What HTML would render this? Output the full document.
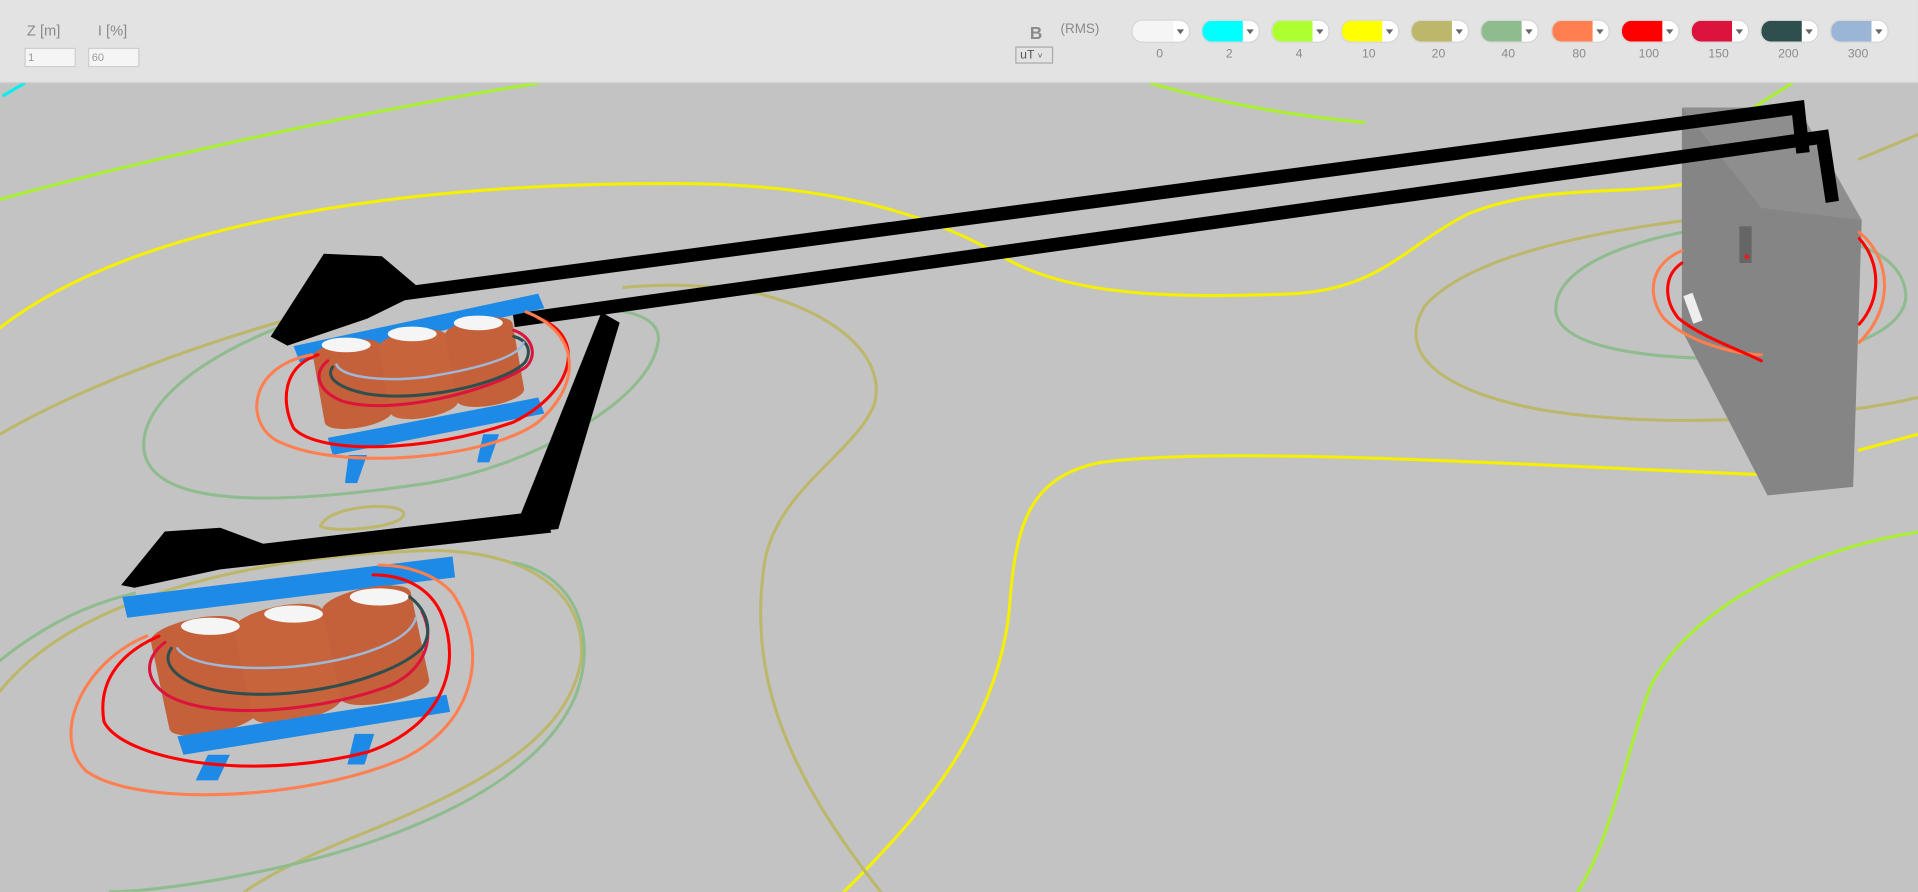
<!DOCTYPE html>
<html><head><meta charset="utf-8"><style>
html,body{margin:0;padding:0;width:1918px;height:892px;overflow:hidden;background:#c3c3c3;font-family:"Liberation Sans",sans-serif}
#w{position:absolute;left:0;top:0;width:1568px;height:729px;transform:scale(1.2232);transform-origin:0 0}
#hdr{position:absolute;left:0;top:0;width:1568px;height:67px;background:#e3e3e3;border-bottom:1px solid #d0d0d0}
.t{position:absolute;color:#8a8a8a;font-size:12px}
.in{position:absolute;width:38px;height:14px;background:#f5f5f5;border:1px solid #ccc;font-size:9px;color:#999;line-height:14px;padding-left:2px;box-sizing:content-box}
.pill{position:absolute;top:16px;width:46px;height:17px;border-radius:9px;border:1px solid #d5d5d5;background:#fff;overflow:hidden}
.pill i{position:absolute;left:0;top:0;width:33px;height:17px}
.pill b{position:absolute;left:36px;top:7px;width:0;height:0;border-left:3px solid transparent;border-right:3px solid transparent;border-top:4px solid #666}
.lab{position:absolute;top:39px;width:46px;text-align:center;font-size:10px;color:#8a8a8a}
svg{position:absolute;left:0;top:0}
</style></head><body><div id="w">
<svg width="1568" height="729" viewBox="0 0 1568 729" fill="none" stroke-linecap="round">
<rect width="1568" height="729" fill="#c3c3c3"/>
<g stroke-width="2.5">
<path d="M3 78 L20 68" stroke="#00f0f0"/>
<path d="M0 163 C120 130 300 90 440 68" stroke="#a8f030"/>
<path d="M940 68 C1000 85 1060 95 1115 100" stroke="#a8f030"/>
<path d="M1415 100 L1465 68" stroke="#a8f030"/>
<path d="M1568 435 C1470 450 1380 500 1350 560 C1330 610 1320 680 1290 729" stroke="#a8f030"/>
<path d="M0 268 C100 190 300 150 550 150 C680 150 760 175 820 210 C870 240 950 245 1060 240 C1130 235 1150 200 1200 175 C1260 150 1330 160 1380 150" stroke="#f5f000"/>
<path d="M1384 114 L1420 145" stroke="#f5f000"/>
<path d="M690 729 C760 660 815 590 825 500 C830 430 840 390 900 378 C1000 365 1200 378 1440 388" stroke="#f5f000"/>
<path d="M1520 368 L1568 355" stroke="#f5f000"/>
<path d="M0 355 C60 320 150 285 240 260" stroke="#bcb76a"/>
<path d="M0 565 C60 490 200 455 350 450 C440 450 480 490 475 540 C465 600 400 640 300 680 C250 700 220 715 200 729" stroke="#bcb76a"/>
<path d="M262 430 C270 412 330 410 330 420 C330 432 270 436 262 430" stroke="#bcb76a"/>
<path d="M720 729 C650 640 610 560 625 460 C635 400 700 370 715 330 C725 290 680 255 620 240 C580 232 540 232 510 235" stroke="#bcb76a"/>
<path d="M1380 180 C1300 190 1200 210 1165 250 C1140 290 1180 320 1260 335 C1350 350 1480 345 1568 325" stroke="#bcb76a"/>
<path d="M1520 130 L1568 110" stroke="#bcb76a"/>
<path d="M285 250 C200 270 110 320 118 370 C128 420 250 410 350 395 C430 382 530 330 538 280 C542 255 500 250 470 255" stroke="#8fbc8f"/>
<path d="M0 540 C50 500 90 490 110 485" stroke="#8fbc8f"/>
<path d="M420 460 C470 470 490 520 470 570 C440 640 330 690 200 715 C150 725 110 729 90 729" stroke="#8fbc8f"/>
<path d="M1375 190 C1300 205 1270 230 1272 255 C1276 285 1350 295 1440 293 C1520 290 1560 265 1558 240 C1555 210 1520 200 1510 198" stroke="#8fbc8f"/>
</g>
<!-- cabinet -->
<polygon points="1375,88 1470,88 1522,180 1515,398 1445,405 1375,270" fill="#858585"/>
<polygon points="1375,88 1470,88 1522,180 1440,170" fill="#8e8e8e"/>
<rect x="1380" y="240" width="8" height="24" fill="#eee" transform="rotate(-20 1384 252)"/>
<rect x="1422" y="185" width="10" height="30" fill="#666"/>
<circle cx="1428" cy="210" r="2" fill="#d22"/>
<g stroke-width="2.5">
<path d="M1375 205 C1350 215 1345 240 1360 260 C1380 280 1420 290 1440 290" stroke="#ff7f50"/>
<path d="M1375 215 C1360 225 1360 245 1372 260 C1390 275 1420 285 1440 295" stroke="#ff0000"/>
<path d="M1520 190 C1545 210 1550 250 1520 280" stroke="#ff7f50"/>
<path d="M1520 195 C1538 215 1538 245 1520 265" stroke="#ff0000"/>
</g>
<!-- busbars -->
<g stroke="#000" fill="#000">
<path d="M330 240 L1470 88 L1474 125" stroke-width="11" fill="none" stroke-linecap="butt"/>
<path d="M420 262 L1490 112 L1498 165" stroke-width="11" fill="none" stroke-linecap="butt"/>
<polygon points="222,275 265,208 312,210 345,238 300,260 235,282"/>
<polygon points="492,256 506,264 456,432 420,436"/>
<polygon points="100,478 135,435 180,432 215,445 445,418 450,435 180,465 110,480"/>
</g>
<!-- top transformer -->
<g>
<polygon points="240,283 440,240 445,252 245,296" fill="#1e8ae8"/>
<rect x="260" y="278" width="56" height="72" rx="28" ry="9" fill="#c5613a" transform="rotate(-10 288 312)"/>
<rect x="314" y="270" width="56" height="72" rx="28" ry="9" fill="#c8643c" transform="rotate(-10 342 305)"/>
<rect x="368" y="260" width="56" height="72" rx="28" ry="9" fill="#c5613a" transform="rotate(-10 396 295)"/>
<ellipse cx="283" cy="282" rx="20" ry="6" fill="#f5f5f5"/><ellipse cx="337" cy="273" rx="20" ry="6" fill="#f5f5f5"/><ellipse cx="391" cy="264" rx="20" ry="6" fill="#f5f5f5"/>
<polygon points="268,358 440,325 445,338 272,372" fill="#1e8ae8"/>
<polygon points="285,372 300,372 292,395 282,395" fill="#1e8ae8"/><polygon points="395,355 408,355 400,378 390,378" fill="#1e8ae8"/>
</g>
<g stroke-width="2.5">
<path d="M260 290 C230 300 230 330 240 350 C260 372 350 370 420 345 C470 320 480 275 440 260" stroke="#ff0000"/>
<path d="M255 290 C200 300 200 350 230 362 C280 385 400 375 440 345 C480 310 470 270 430 255" stroke="#ff7f50"/>
<path d="M268 295 C255 305 260 320 280 328 C320 340 400 320 430 300 C440 290 435 275 420 270" stroke="#dc143c"/>
<path d="M272 300 C265 310 280 318 300 322 C350 330 420 310 430 295 C435 285 430 278 420 275" stroke="#2f4f4f"/>
<path d="M275 298 C280 310 320 312 350 308 C400 300 425 290 428 280" stroke="#a0b8d8" stroke-width="2"/>
</g>
<!-- bottom transformer -->
<g>
<polygon points="100,488 370,455 372,472 104,505" fill="#1e8ae8"/>
<rect x="130" y="505" width="74" height="95" rx="37" ry="11" fill="#c5613a" transform="rotate(-12 167 552)"/>
<rect x="198" y="495" width="74" height="95" rx="37" ry="11" fill="#c8643c" transform="rotate(-12 235 542)"/>
<rect x="270" y="480" width="74" height="95" rx="37" ry="11" fill="#c5613a" transform="rotate(-12 307 527)"/>
<ellipse cx="172" cy="512" rx="24" ry="7" fill="#f5f5f5"/><ellipse cx="240" cy="502" rx="24" ry="7" fill="#f5f5f5"/><ellipse cx="310" cy="488" rx="24" ry="7" fill="#f5f5f5"/>
<polygon points="145,602 365,568 368,582 150,617" fill="#1e8ae8"/>
<polygon points="170,617 188,617 178,638 160,638" fill="#1e8ae8"/><polygon points="290,600 306,600 298,625 284,625" fill="#1e8ae8"/>
</g>
<g stroke-width="2.5">
<path d="M130 520 C95 535 80 560 85 590 C100 620 200 640 300 615 C360 595 380 545 360 500 C350 480 330 470 305 470" stroke="#ff0000"/>
<path d="M120 520 C70 540 40 600 70 630 C110 660 250 655 330 620 C390 590 400 530 370 485 C355 468 330 462 310 462" stroke="#ff7f50"/>
<path d="M135 525 C115 540 120 560 140 570 C180 590 270 580 320 560 C350 545 355 520 345 500" stroke="#dc143c"/>
<path d="M140 530 C130 545 150 560 180 565 C240 575 320 555 345 530 C355 515 348 498 335 488" stroke="#2f4f4f"/>
<path d="M145 530 C155 545 200 548 240 545 C290 540 335 525 340 505" stroke="#a0b8d8" stroke-width="2"/>
</g>
</svg>
<div id="hdr">
<div class="t" style="left:22px;top:18px">Z [m]</div>
<div class="t" style="left:80px;top:18px">I [%]</div>
<div class="in" style="left:20px;top:39px">1</div>
<div class="in" style="left:72px;top:39px">60</div>
<div class="t" style="left:842px;top:19px;font-size:14px;font-weight:bold">B</div>
<div class="t" style="left:867px;top:18px;font-size:11px">(RMS)</div>
<div style="position:absolute;left:830px;top:38px;width:31px;height:14px;border:1px solid #aaa;font-size:10px;color:#555;line-height:14px;padding-left:3px;box-sizing:border-box">uT <span style="font-size:7px">˅</span></div>
<div class="pill" style="left:925px"><i style="background:#f5f5f5"></i><b></b></div><div class="lab" style="left:925px">0</div>
<div class="pill" style="left:982px"><i style="background:#00ffff"></i><b></b></div><div class="lab" style="left:982px">2</div>
<div class="pill" style="left:1039px"><i style="background:#adff2f"></i><b></b></div><div class="lab" style="left:1039px">4</div>
<div class="pill" style="left:1096px"><i style="background:#ffff00"></i><b></b></div><div class="lab" style="left:1096px">10</div>
<div class="pill" style="left:1153px"><i style="background:#bdb76b"></i><b></b></div><div class="lab" style="left:1153px">20</div>
<div class="pill" style="left:1210px"><i style="background:#8fbc8f"></i><b></b></div><div class="lab" style="left:1210px">40</div>
<div class="pill" style="left:1268px"><i style="background:#ff7f50"></i><b></b></div><div class="lab" style="left:1268px">80</div>
<div class="pill" style="left:1325px"><i style="background:#ff0000"></i><b></b></div><div class="lab" style="left:1325px">100</div>
<div class="pill" style="left:1382px"><i style="background:#dc143c"></i><b></b></div><div class="lab" style="left:1382px">150</div>
<div class="pill" style="left:1439px"><i style="background:#2f4f4f"></i><b></b></div><div class="lab" style="left:1439px">200</div>
<div class="pill" style="left:1496px"><i style="background:#9ab5d5"></i><b></b></div><div class="lab" style="left:1496px">300</div>
</div>
</div></body></html>
